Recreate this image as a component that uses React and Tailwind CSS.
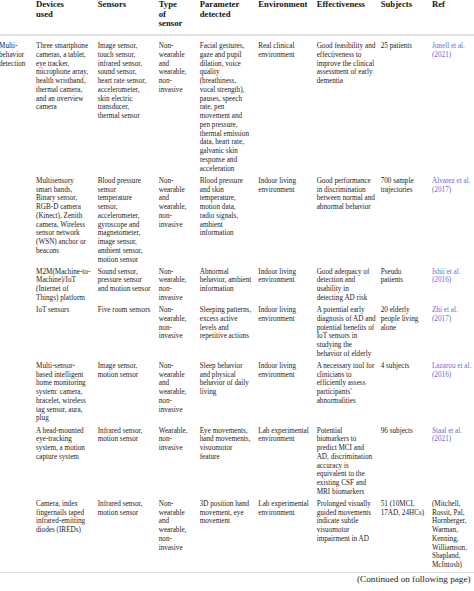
const cols = 'grid grid-cols-[37px_61.7px_61px_41px_58.6px_58.4px_64px_51.3px_1fr]';

const rows = [
  {
    group: ['Multi-', 'behavior', 'detection'],
    devices: ['Three smartphone', 'cameras, a tablet,', 'eye tracker,', 'microphone array,', 'health wristband,', 'thermal camera,', 'and an overview', 'camera'],
    sensors: ['Image sensor,', 'touch sensor,', 'infrared sensor,', 'sound sensor,', 'heart rate sensor,', 'accelerometer,', 'skin electric', 'transducer,', 'thermal sensor'],
    type: ['Non-', 'wearable', 'and', 'wearable,', 'non-', 'invasive'],
    params: ['Facial gestures,', 'gaze and pupil', 'dilation, voice', 'quality', '(breathiness,', 'vocal strength),', 'pauses, speech', 'rate, pen', 'movement and', 'pen pressure,', 'thermal emission', 'data, heart rate,', 'galvanic skin', 'response and', 'acceleration'],
    env: ['Real clinical', 'environment'],
    effect: ['Good feasibility and', 'effectiveness to', 'improve the clinical', 'assessment of early', 'dementia'],
    subjects: ['25 patients'],
    ref: ['Jonell et al.', '(2021)'],
    link: true,
  },
  {
    devices: ['Multisensory', 'smart bands,', 'Binary sensor,', 'RGB-D camera', '(Kinect), Zenith', 'camera, Wireless', 'sensor network', '(WSN) anchor or', 'beacons'],
    sensors: ['Blood pressure', 'sensor', 'temperature', 'sensor,', 'accelerometer,', 'gyroscope and', 'magnetometer,', 'image sensor,', 'ambient sensor,', 'motion sensor'],
    type: ['Non-', 'wearable', 'and', 'wearable,', 'non-', 'invasive'],
    params: ['Blood pressure', 'and skin', 'temperature,', 'motion data,', 'radio signals,', 'ambient', 'information'],
    env: ['Indoor living', 'environment'],
    effect: ['Good performance', 'in discrimination', 'between normal and', 'abnormal behavior'],
    subjects: ['700 sample', 'trajectories'],
    ref: ['Alvarez et al.', '(2017)'],
    link: true,
  },
  {
    devices: ['M2M(Machine-to-', 'Machine)/IoT', '(Internet of', 'Things) platform'],
    sensors: ['Sound sensor,', 'pressure sensor', 'and motion sensor'],
    type: ['Non-', 'wearable,', 'non-', 'invasive'],
    params: ['Abnormal', 'behavior, ambient', 'information'],
    env: ['Indoor living', 'environment'],
    effect: ['Good adequacy of', 'detection and', 'usability in', 'detecting AD risk'],
    subjects: ['Pseudo', 'patients'],
    ref: ['Ishii et al.', '(2016)'],
    link: true,
  },
  {
    devices: ['IoT sensors'],
    sensors: ['Five room sensors'],
    type: ['Non-', 'wearable,', 'non-', 'invasive'],
    params: ['Sleeping patterns,', 'excess active', 'levels and', 'repetitive actions'],
    env: ['Indoor living', 'environment'],
    effect: ['A potential early', 'diagnosis of AD and', 'potential benefits of', 'IoT sensors in', 'studying the', 'behavior of elderly'],
    subjects: ['20 elderly', 'people living', 'alone'],
    ref: ['Zhi et al.', '(2017)'],
    link: true,
  },
  {
    devices: ['Multi-sensor-', 'based intelligent', 'home monitoring', 'system: camera,', 'bracelet, wireless', 'tag sensor, aura,', 'plug'],
    sensors: ['Image sensor,', 'motion sensor'],
    type: ['Non-', 'wearable', 'and', 'wearable,', 'non-', 'invasive'],
    params: ['Sleep behavior', 'and physical', 'behavior of daily', 'living'],
    env: ['Indoor living', 'environment'],
    effect: ['A necessary tool for', 'clinicians to', 'efficiently assess', "participants'", 'abnormalities'],
    subjects: ['4 subjects'],
    ref: ['Lazarou et al.', '(2016)'],
    link: true,
  },
  {
    devices: ['A head-mounted', 'eye-tracking', 'system, a motion', 'capture system'],
    sensors: ['Infrared sensor,', 'motion sensor'],
    type: ['Wearable,', 'non-', 'invasive'],
    params: ['Eye movements,', 'hand movements,', 'visuomotor', 'feature'],
    env: ['Lab experimental', 'environment'],
    effect: ['Potential', 'biomarkers to', 'predict MCI and', 'AD, discrimination', 'accuracy is', 'equivalent to the', 'existing CSF and', 'MRI biomarkers'],
    subjects: ['96 subjects'],
    ref: ['Staal et al.', '(2021)'],
    link: true,
  },
  {
    devices: ['Camera, index', 'fingernails taped', 'infrared-emitting', 'diodes (IREDs)'],
    sensors: ['Infrared sensor,', 'motion sensor'],
    type: ['Non-', 'wearable', 'and', 'wearable,', 'non-', 'invasive'],
    params: ['3D position hand', 'movement, eye', 'movement'],
    env: ['Lab experimental', 'environment'],
    effect: ['Prolonged visually', 'guided movements', 'indicate subtle', 'visuomotor', 'impairment in AD'],
    subjects: ['51 (10MCI,', '17AD, 24HCs)'],
    ref: ['(Mitchell,', 'Rossit, Pal,', 'Hornberger,', 'Warman,', 'Kenning,', 'Williamson,', 'Shapland,', 'McIntosh)'],
    link: false,
  },
];

function Lines({ lines = [], className = '' }) {
  return (
    <div className={'whitespace-nowrap ' + className}>
      {lines.map((l, i) => (
        <div key={i}>{l}</div>
      ))}
    </div>
  );
}

export default function App() {
  return (
    <div className="w-[474px] h-[591px] overflow-hidden bg-white text-[#1c1c1c] font-['Liberation_Serif',serif]">
      <div className="ml-[-1px] w-[475px]">
        {/* Header */}
        <div className={cols + ' h-[34px] text-[8.7px] leading-[9.7px] font-bold text-[#141414]'}>
          <div />
          <Lines lines={['Devices', 'used']} />
          <Lines lines={['Sensors']} />
          <Lines lines={['Type', 'of', 'sensor']} />
          <Lines lines={['Parameter', 'detected']} />
          <Lines lines={['Environment']} />
          <Lines lines={['Effectiveness']} />
          <Lines lines={['Subjects']} />
          <Lines lines={['Ref']} />
        </div>
        <div className="h-[2px] bg-[#e2e2e2]" />

        {/* Body */}
        <div className="pt-[4.5px] text-[7.2px] leading-[8.75px]">
          {rows.map((r, i) => (
            <div key={i} className={cols + ' py-[1.7px]'}>
              <Lines lines={r.group} />
              <Lines lines={r.devices} />
              <Lines lines={r.sensors} />
              <Lines lines={r.type} />
              <Lines lines={r.params} />
              <Lines lines={r.env} />
              <Lines lines={r.effect} />
              <Lines lines={r.subjects} />
              <Lines lines={r.ref} className={r.link ? 'text-[#6a6ad8]' : ''} />
            </div>
          ))}
        </div>
      </div>

      <div className="h-px bg-[#dedede]" />
      <div className="pl-[357px] pt-[1px] whitespace-nowrap text-[9.2px] leading-[10px]">
        (Continued on following page)
      </div>
    </div>
  );
}
